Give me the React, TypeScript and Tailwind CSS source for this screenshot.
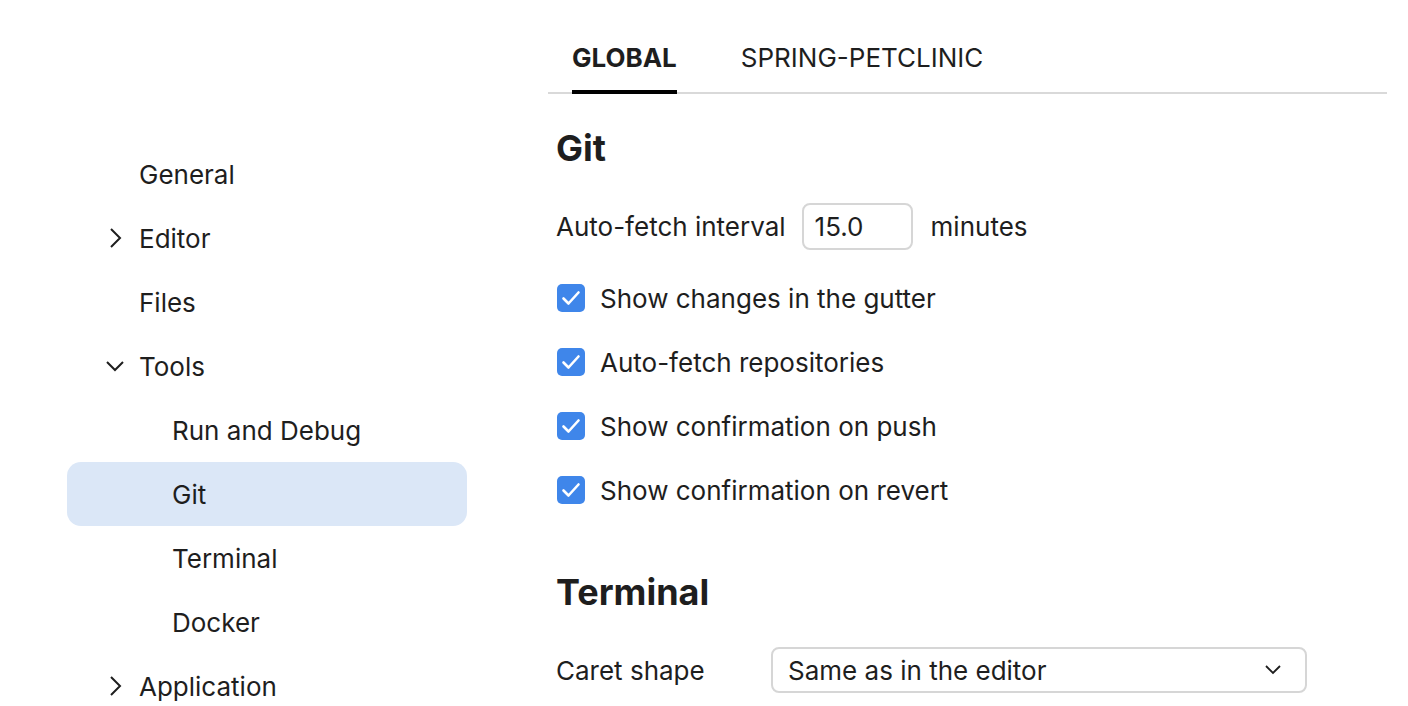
import React, { useState } from 'react';

const font = { fontFamily: 'Inter, "Noto Sans", sans-serif' };

type NavItem = { label: string; level: 1 | 2; chevron?: 'right' | 'down' };

const navItems: NavItem[] = [
  { label: 'General', level: 1 },
  { label: 'Editor', level: 1, chevron: 'right' },
  { label: 'Files', level: 1 },
  { label: 'Tools', level: 1, chevron: 'down' },
  { label: 'Run and Debug', level: 2 },
  { label: 'Git', level: 2 },
  { label: 'Terminal', level: 2 },
  { label: 'Docker', level: 2 },
  { label: 'Application', level: 1, chevron: 'right' },
];

function Chevron({ dir }: { dir: 'right' | 'down' }) {
  if (dir === 'right') {
    return (
      <svg width="24" height="24" viewBox="0 0 24 24" fill="none">
        <path d="M8 3l9 9-9 9" stroke="#1e1e1e" strokeWidth="2" />
      </svg>
    );
  }
  return (
    <svg width="24" height="24" viewBox="0 0 24 24" fill="none">
      <path d="M4 8l8 8 8-8" stroke="#1e1e1e" strokeWidth="2" />
    </svg>
  );
}

function Checkbox({ label }: { label: string }) {
  const [on, setOn] = useState(true);
  return (
    <label className="flex h-16 items-center cursor-pointer" onClick={() => setOn(!on)}>
      <span className={`ml-px flex h-7 w-7 items-center justify-center rounded-[5px] ${on ? 'bg-[#3f86ea]' : 'border-2 border-[#c4c4c4] bg-white'}`}>
        {on && (
          <svg width="28" height="28" viewBox="0 0 28 28" fill="none">
            <path d="M6.5 14.5l5 5 10-11" stroke="white" strokeWidth="2.6" strokeLinecap="round" strokeLinejoin="round" />
          </svg>
        )}
      </span>
      <span className="ml-[15px]">{label}</span>
    </label>
  );
}

export default function App() {
  const [tab, setTab] = useState('GLOBAL');
  const [active, setActive] = useState('Git');

  return (
    <div className="flex h-[706px] w-[1408px] overflow-hidden bg-white text-[26px] text-[#1e1e1e]" style={font}>
      {/* sidebar */}
      <nav className="w-[548px] shrink-0 pl-[67px] pt-[142px]">
        {navItems.map((item) => (
          <div
            key={item.label}
            onClick={() => setActive(item.label)}
            className={`flex h-16 w-[400px] items-center rounded-[14px] ${active === item.label ? 'bg-[#dbe7f7]' : ''} ${item.level === 2 ? 'pl-[105px]' : 'pl-9'}`}
          >
            {item.level === 1 && (
              <span className="mr-3 flex h-6 w-6 items-center justify-center">
                {item.chevron && <Chevron dir={item.chevron} />}
              </span>
            )}
            <span>{item.label}</span>
          </div>
        ))}
      </nav>

      {/* main */}
      <main className="w-[839px] pt-[42px]">
        <div className="flex gap-16 border-b-2 border-[#d9d9d9] pl-6">
          {['GLOBAL', 'SPRING-PETCLINIC'].map((t) => (
            <button
              key={t}
              onClick={() => setTab(t)}
              className={`-mb-[2px] border-b-4 pb-4 leading-8 ${tab === t ? 'border-black font-bold' : 'border-transparent'}`}
            >
              {t}
            </button>
          ))}
        </div>

        <div className="pl-2">
          <h2 className="mt-[30px] text-[36px] font-bold leading-[48px]">Git</h2>

          <div className="mt-[22px] flex h-16 items-center">
            <span>Auto-fetch interval</span>
            <input
              defaultValue="15.0"
              className="ml-4 h-[47px] w-[111px] rounded-lg border-2 border-[#d6d6d6] px-[11px] outline-none"
            />
            <span className="ml-[18px]">minutes</span>
          </div>

          <div className="mt-2">
            <Checkbox label="Show changes in the gutter" />
            <Checkbox label="Auto-fetch repositories" />
            <Checkbox label="Show confirmation on push" />
            <Checkbox label="Show confirmation on revert" />
          </div>

          <h2 className="mt-[46px] text-[36px] font-bold leading-[48px]">Terminal</h2>

          <div className="mt-[22px] flex h-16 items-center">
            <span className="w-[215px]">Caret shape</span>
            <button className="flex h-[46px] w-[536px] items-center justify-between rounded-lg border-2 border-[#d6d6d6] pl-[15px] pr-6">
              <span>Same as in the editor</span>
              <svg width="16" height="10" viewBox="0 0 16 10" fill="none">
                <path d="M1 1l7 7 7-7" stroke="#1e1e1e" strokeWidth="1.8" />
              </svg>
            </button>
          </div>
        </div>
      </main>
    </div>
  );
}
